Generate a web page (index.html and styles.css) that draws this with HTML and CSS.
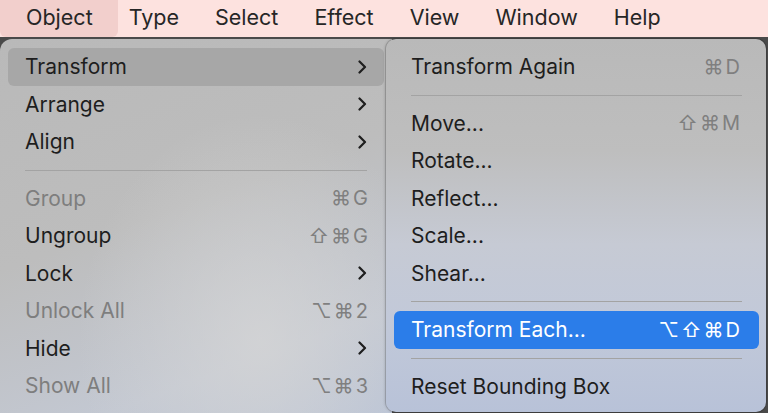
FILE: index.html
```html
<!DOCTYPE html>
<html lang="en">
<head>
    <meta charset="UTF-8">
    <meta name="viewport" content="width=device-width, initial-scale=1.0">
    <title>Object Menu</title>
    <link rel="stylesheet" href="styles.css">
</head>
<body>

    <div class="menubar">
        <span class="menubar-item active">Object</span>
        <span class="menubar-item">Type</span>
        <span class="menubar-item">Select</span>
        <span class="menubar-item">Effect</span>
        <span class="menubar-item">View</span>
        <span class="menubar-item">Window</span>
        <span class="menubar-item">Help</span>
    </div>

    <div class="menus">
        <div class="menu menu-main">
            <div class="menu-item selected">
                <span class="label">Transform</span>
                <svg class="chevron" width="9" height="14" viewBox="0 0 9 14"><path d="M1.5 1.5 L7 7 L1.5 12.5" fill="none" stroke="#1e1e1e" stroke-width="2.2" stroke-linecap="round" stroke-linejoin="round"/></svg>
            </div>
            <div class="menu-item">
                <span class="label">Arrange</span>
                <svg class="chevron" width="9" height="14" viewBox="0 0 9 14"><path d="M1.5 1.5 L7 7 L1.5 12.5" fill="none" stroke="#1e1e1e" stroke-width="2.2" stroke-linecap="round" stroke-linejoin="round"/></svg>
            </div>
            <div class="menu-item">
                <span class="label">Align</span>
                <svg class="chevron" width="9" height="14" viewBox="0 0 9 14"><path d="M1.5 1.5 L7 7 L1.5 12.5" fill="none" stroke="#1e1e1e" stroke-width="2.2" stroke-linecap="round" stroke-linejoin="round"/></svg>
            </div>
            <div class="separator"></div>
            <div class="menu-item disabled">
                <span class="label">Group</span>
                <span class="shortcut">⌘G</span>
            </div>
            <div class="menu-item">
                <span class="label">Ungroup</span>
                <span class="shortcut">⇧⌘G</span>
            </div>
            <div class="menu-item">
                <span class="label">Lock</span>
                <svg class="chevron" width="9" height="14" viewBox="0 0 9 14"><path d="M1.5 1.5 L7 7 L1.5 12.5" fill="none" stroke="#1e1e1e" stroke-width="2.2" stroke-linecap="round" stroke-linejoin="round"/></svg>
            </div>
            <div class="menu-item disabled">
                <span class="label">Unlock All</span>
                <span class="shortcut">⌥⌘2</span>
            </div>
            <div class="menu-item">
                <span class="label">Hide</span>
                <svg class="chevron" width="9" height="14" viewBox="0 0 9 14"><path d="M1.5 1.5 L7 7 L1.5 12.5" fill="none" stroke="#1e1e1e" stroke-width="2.2" stroke-linecap="round" stroke-linejoin="round"/></svg>
            </div>
            <div class="menu-item disabled">
                <span class="label">Show All</span>
                <span class="shortcut">⌥⌘3</span>
            </div>
        </div>

        <div class="menu menu-sub">
            <div class="menu-item">
                <span class="label">Transform Again</span>
                <span class="shortcut">⌘D</span>
            </div>
            <div class="separator"></div>
            <div class="menu-item">
                <span class="label">Move...</span>
                <span class="shortcut">⇧⌘M</span>
            </div>
            <div class="menu-item">
                <span class="label">Rotate...</span>
            </div>
            <div class="menu-item">
                <span class="label">Reflect...</span>
            </div>
            <div class="menu-item">
                <span class="label">Scale...</span>
            </div>
            <div class="menu-item">
                <span class="label">Shear...</span>
            </div>
            <div class="separator"></div>
            <div class="menu-item active">
                <span class="label">Transform Each...</span>
                <span class="shortcut">⌥⇧⌘D</span>
            </div>
            <div class="separator"></div>
            <div class="menu-item">
                <span class="label">Reset Bounding Box</span>
            </div>
        </div>
    </div>

</body>
</html>
```

FILE: styles.css
```css
        body {
            margin: 0;
            background-color: #4a4a4a;
            font-family: Inter, "Noto Sans", sans-serif;
            color: #1e1e1e;
            width: 768px;
            height: 413px;
            overflow: hidden;
        }
        .menubar {
            display: flex;
            align-items: stretch;
            height: 37px;
            background-color: #fde2df;
            font-size: 21.5px;
            color: #262626;
        }
        .menubar-item {
            display: flex;
            align-items: center;
            padding: 0 18px 4px 18px;
        }
        .menubar-item.active {
            padding: 0 25px 4px 26px;
            margin-right: -7px;
            background-color: #f2cfcc;
            border-radius: 0 0 6px 6px;
        }
        .menus {
            display: flex;
            align-items: flex-start;
            padding-top: 2px;
        }
        .menu {
            display: flex;
            flex-direction: column;
            border-radius: 10px;
            font-size: 21px;
        }
        .menu-main {
            width: 392px;
            height: 374px;
            flex-shrink: 0;
            padding: 9px 8px 0 8px;
            box-sizing: border-box;
            border-radius: 12px 0 0 0;
            background:
                radial-gradient(ellipse 260px 320px at 260px 300px, rgba(214, 214, 214, 0.75), rgba(214, 214, 214, 0) 70%),
                linear-gradient(160deg, #b9b9b9 0%, #bdbdbd 45%, #c3c8d2 80%, #b9c3d6 100%);
        }
        .menu-sub {
            width: 380px;
            height: 373px;
            flex-shrink: 0;
            margin-left: -6px;
            padding: 9px 7px 0 8px;
            box-sizing: border-box;
            box-shadow: 0 0 0 1px rgba(0, 0, 0, 0.12), -1px 0 3px rgba(0, 0, 0, 0.18);
            background:
                linear-gradient(180deg, #b9b9b9 0%, #bebebe 30%, #c6cad4 55%, #c2c9d9 75%, #b8c2d8 100%);
        }
        .menu-item {
            display: flex;
            align-items: center;
            justify-content: space-between;
            height: 37.5px;
            padding: 0 17px 0 17px;
            border-radius: 6px;
            box-sizing: border-box;
        }
        .menu-main .menu-item {
            padding-right: 14px;
        }
        .menu-item.selected {
            background-color: #a7a7a7;
        }
        .menu-item.active {
            background-color: #2b7de9;
            color: #ffffff;
        }
        .menu-item.disabled .label {
            color: #7e7e7e;
        }
        .chevron {
            margin-right: 3px;
        }
        .shortcut {
            font-family: Inter, "DejaVu Sans", sans-serif;
            color: #7f7f7f;
            font-size: 20px;
            letter-spacing: 2px;
        }
        .menu-item.active .shortcut {
            color: #ffffff;
        }
        .separator {
            height: 1px;
            margin: 9px 17px 9px 17px;
            background-color: #a3a3a3;
        }
```
